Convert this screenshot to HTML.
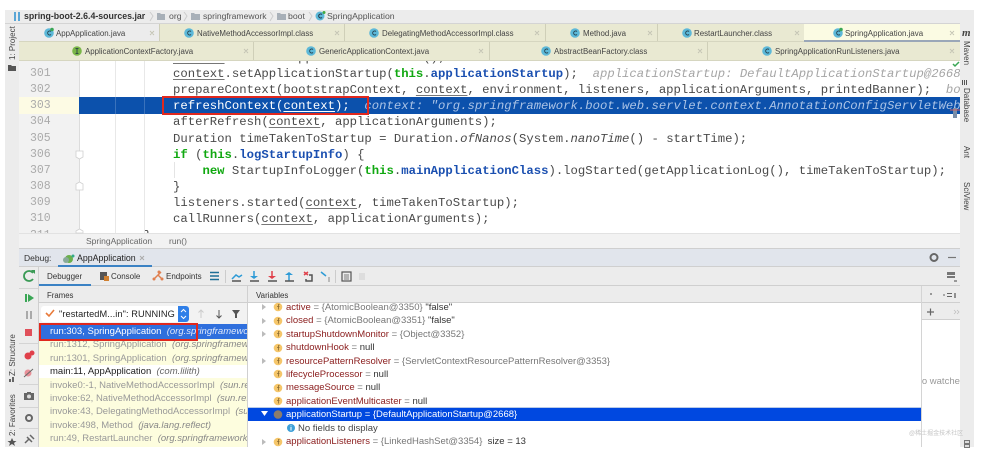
<!DOCTYPE html>
<html><head><meta charset="utf-8">
<style>
html,body{margin:0;padding:0;background:#fff;width:985px;height:455px;overflow:hidden}
#a{position:absolute;left:0;top:0;width:985px;height:455px;overflow:hidden;filter:blur(.3px);font-family:"Liberation Sans",sans-serif;font-size:9px;color:#333}
.r{position:absolute}
.t{position:absolute;white-space:nowrap;line-height:14px;height:14px}
.m{font-family:"Liberation Mono",monospace;font-size:12.28px;color:#4a4a4a;left:173px}
.n{font-family:"Liberation Mono",monospace;font-size:11.5px;color:#aaa;left:30px}
.m u{text-decoration-color:#777;text-underline-offset:2px}
.k{color:#10a810;font-weight:bold}
.f{color:#1a4fb0;font-weight:bold}
.h{color:#a5a5a5;font-style:italic}
.fr{color:#999;left:50px;font-size:9.5px}
.fr i{color:#888}
.v{left:286px;color:#777;font-size:9.5px}
.v b{font-weight:normal;color:#8c2020}
.v s{text-decoration:none;color:#333}
.tb{font-size:7.9px;color:#444}
.rot{position:absolute;white-space:nowrap;line-height:10px;font-size:8px;color:#444;transform-origin:0 0}
svg{position:absolute;left:0;top:0}
</style></head><body><div id="a">

<!-- chrome backgrounds -->
<div class="r" style="left:5px;top:10px;width:969px;height:437px;background:#ececec"></div>
<div class="r" style="left:5px;top:23px;width:955px;height:1px;background:#d4d4d4"></div>

<!-- tab rows -->
<div class="r" style="left:19px;top:24px;width:941px;height:18px;background:#e9e9d2"></div>
<div class="r" style="left:19px;top:24px;width:140px;height:17px;background:#ececec"></div>
<div class="r" style="left:804px;top:24px;width:156px;height:17px;background:#fbfbe3"></div>
<div class="r" style="left:804px;top:40px;width:156px;height:2px;background:#9aa7b8"></div>
<div class="r" style="left:19px;top:42px;width:941px;height:18px;background:#e9e9d2"></div>
<div class="r" style="left:19px;top:41px;width:785px;height:1px;background:#d6d6c0"></div>
<div class="r" style="left:19px;top:60px;width:941px;height:1px;background:#d6d6c0"></div>
<div class="r" style="left:159px;top:24px;width:1px;height:17px;background:#cfcfb8"></div>
<div class="r" style="left:344px;top:24px;width:1px;height:17px;background:#cfcfb8"></div>
<div class="r" style="left:545px;top:24px;width:1px;height:17px;background:#cfcfb8"></div>
<div class="r" style="left:657px;top:24px;width:1px;height:17px;background:#cfcfb8"></div>
<div class="r" style="left:253px;top:42px;width:1px;height:18px;background:#cfcfb8"></div>
<div class="r" style="left:489px;top:42px;width:1px;height:18px;background:#cfcfb8"></div>
<div class="r" style="left:707px;top:42px;width:1px;height:18px;background:#cfcfb8"></div>

<!-- editor -->
<div class="r" style="left:19px;top:61px;width:941px;height:173px;background:#fff"></div>
<div class="r" style="left:19px;top:61px;width:60px;height:173px;background:#f2f2f2"></div>
<div class="r" style="left:79px;top:61px;width:1px;height:173px;background:#dcdcdc"></div>
<div class="r" style="left:115px;top:61px;width:1px;height:173px;background:#e8e8e8"></div>
<div class="r" style="left:144px;top:61px;width:1px;height:173px;background:#e8e8e8"></div>
<div class="r" style="left:174px;top:162px;width:1px;height:16px;background:#e4e4e4"></div>
<div class="r" style="left:19px;top:97px;width:60px;height:17px;background:#fdfbe4"></div>
<div class="r" style="left:79px;top:97px;width:881px;height:17px;background:#0c51ac"></div>
<div class="r" style="left:115px;top:97px;width:1px;height:17px;background:#3a72bc"></div>
<div class="r" style="left:144px;top:97px;width:1px;height:17px;background:#3a72bc"></div>

<!-- code -->
<div class="r" style="left:0;top:61px;width:960px;height:172px;overflow:hidden">
<div class="t m" style="top:-10px"><u>context</u> = createApplicationContext();</div>
<div class="t m" style="top:6px"><u>context</u>.setApplicationStartup(<span class="k">this</span>.<span class="f">applicationStartup</span>);&nbsp;&nbsp;<span class="h">applicationStartup: DefaultApplicationStartup@2668</span></div>
<div class="t m" style="top:22px">prepareContext(bootstrapContext, <u>context</u>, environment, listeners, applicationArguments, printedBanner);&nbsp;&nbsp;<span class="h">bootstrapContext</span></div>
<div class="t m" style="top:38px;color:#fff">refreshContext(<u style="text-decoration-color:#fff">context</u>);&nbsp;&nbsp;<span style="font-style:italic;color:#aac3e6">context: "org.springframework.boot.web.servlet.context.AnnotationConfigServletWebServerApplicationContext</span></div>
<div class="t m" style="top:54px">afterRefresh(<u>context</u>, applicationArguments);</div>
<div class="t m" style="top:70.500px">Duration timeTakenToStartup = Duration.<i>ofNanos</i>(System.<i>nanoTime</i>() - startTime);</div>
<div class="t m" style="top:87px"><span class="k">if</span> (<span class="k">this</span>.<span class="f">logStartupInfo</span>) {</div>
<div class="t m" style="top:103px">&nbsp;&nbsp;&nbsp;&nbsp;<span class="k">new</span> StartupInfoLogger(<span class="k">this</span>.<span class="f">mainApplicationClass</span>).logStarted(getApplicationLog(), timeTakenToStartup);</div>
<div class="t m" style="top:119px">}</div>
<div class="t m" style="top:135px">listeners.started(<u>context</u>, timeTakenToStartup);</div>
<div class="t m" style="top:151px">callRunners(<u>context</u>, applicationArguments);</div>
<div class="t m" style="top:168px;left:144px">}</div>
<div class="t n" style="top:6px">301</div>
<div class="t n" style="top:22px">302</div>
<div class="t n" style="top:38px">303</div>
<div class="t n" style="top:54px">304</div>
<div class="t n" style="top:70.500px">305</div>
<div class="t n" style="top:87px">306</div>
<div class="t n" style="top:103px">307</div>
<div class="t n" style="top:119px">308</div>
<div class="t n" style="top:135px">309</div>
<div class="t n" style="top:151px">310</div>
<div class="t n" style="top:168px">311</div>
</div>

<!-- breadcrumb top -->
<div class="t" style="left:24px;top:9px;font-weight:bold;color:#333;font-size:8.8px">spring-boot-2.6.4-sources.jar</div>
<div class="t" style="left:169px;top:9px;color:#555;font-size:8.7px">org</div>
<div class="t" style="left:203px;top:9px;color:#555;font-size:8.6px">springframework</div>
<div class="t" style="left:288px;top:9px;color:#555;font-size:8.7px">boot</div>
<div class="t" style="left:327px;top:9px;color:#555;font-size:8.7px">SpringApplication</div>

<!-- tabs -->
<div class="t tb" style="left:56px;top:27px">AppApplication.java</div>
<div class="t tb" style="left:197px;top:27px">NativeMethodAccessorImpl.class</div>
<div class="t tb" style="left:382px;top:27px">DelegatingMethodAccessorImpl.class</div>
<div class="t tb" style="left:583px;top:27px">Method.java</div>
<div class="t tb" style="left:694px;top:27px">RestartLauncher.class</div>
<div class="t tb" style="left:845px;top:27px">SpringApplication.java</div>
<div class="t tb" style="left:85px;top:45px">ApplicationContextFactory.java</div>
<div class="t tb" style="left:319px;top:45px">GenericApplicationContext.java</div>
<div class="t tb" style="left:554px;top:45px">AbstractBeanFactory.class</div>
<div class="t tb" style="left:775px;top:45px">SpringApplicationRunListeners.java</div>

<!-- breadcrumb bottom -->
<div class="r" style="left:19px;top:233px;width:941px;height:15px;background:#f2f2f2;border-top:1px solid #e2e2e2;box-sizing:border-box"></div>
<div class="t" style="left:86px;top:234px;color:#666;font-size:8.5px">SpringApplication</div>
<div class="t" style="left:169px;top:234px;color:#666;font-size:8.5px">run()</div>

<!-- debug header -->
<div class="r" style="left:19px;top:248px;width:941px;height:19px;background:#e1e5ec;border-top:1px solid #cfcfcf;border-bottom:1px solid #cfcfcf;box-sizing:border-box"></div>
<div class="r" style="left:58px;top:265px;width:94px;height:2px;background:#3b82c4"></div>
<div class="t" style="left:24px;top:251px;font-size:8.5px;color:#333">Debug:</div>
<div class="t" style="left:77px;top:251px;font-size:8.8px;color:#222">AppApplication</div>

<!-- toolbar -->
<div class="r" style="left:19px;top:267px;width:19px;height:180px;background:#ececec"></div>
<div class="r" style="left:38px;top:267px;width:922px;height:19px;background:#ececec"></div>
<div class="r" style="left:38px;top:267px;width:1px;height:180px;background:#cfcfcf"></div>
<div class="r" style="left:39px;top:285px;width:921px;height:1px;background:#cfcfcf"></div>
<div class="r" style="left:39px;top:284px;width:52px;height:2px;background:#3b82c4"></div>
<div class="t" style="left:47px;top:270px;font-size:8px;color:#333">Debugger</div>
<div class="t" style="left:111px;top:270px;font-size:8px;color:#333">Console</div>
<div class="t" style="left:166px;top:270px;font-size:8px;color:#333">Endpoints</div>

<!-- panel headers -->
<div class="r" style="left:39px;top:286px;width:921px;height:17px;background:#ececec;border-bottom:1px solid #cfcfcf;box-sizing:border-box"></div>
<div class="t" style="left:47px;top:289px;font-size:7.8px;color:#333">Frames</div>
<div class="t" style="left:256px;top:289px;font-size:7.9px;color:#333">Variables</div>
<div class="r" style="left:247px;top:286px;width:1px;height:161px;background:#d0d0d0"></div>

<!-- frames -->
<div class="r" style="left:39px;top:303px;width:208px;height:21px;background:#f2f2f2"></div>
<div class="r" style="left:41px;top:306px;width:148px;height:16px;background:#fff;border-radius:3px"></div>
<div class="r" style="left:178px;top:306px;width:11px;height:16px;background:#2f7fe8;border-radius:0 3px 3px 0"></div>
<div class="t" style="left:59px;top:307px;font-size:9.2px;color:#222;letter-spacing:.1px">"restartedM...in": RUNNING</div>

<div class="r" style="left:39px;top:324px;width:208px;height:123px;background:#fdfdde"></div>
<div class="r" style="left:39px;top:324px;width:208px;height:15px;background:#2f6fdd"></div>
<div class="r" style="left:39px;top:365px;width:208px;height:13px;background:#fff"></div>
<div class="r" style="left:39px;top:324px;width:208px;height:123px;overflow:hidden">
<div class="t fr" style="left:11px;top:1px;color:#fff">run:303, SpringApplication&nbsp; <i style="color:#dfe8fa">(org.springframework.boot)</i></div>
<div class="t fr" style="left:11px;top:14px">run:1312, SpringApplication&nbsp; <i>(org.springframework.boot)</i></div>
<div class="t fr" style="left:11px;top:28px">run:1301, SpringApplication&nbsp; <i>(org.springframework.boot)</i></div>
<div class="t fr" style="left:11px;top:41px;color:#222">main:11, AppApplication&nbsp; <i style="color:#666">(com.lilith)</i></div>
<div class="t fr" style="left:11px;top:55px">invoke0:-1, NativeMethodAccessorImpl&nbsp; <i>(sun.reflect)</i></div>
<div class="t fr" style="left:11px;top:68px">invoke:62, NativeMethodAccessorImpl&nbsp; <i>(sun.reflect)</i></div>
<div class="t fr" style="left:11px;top:81px">invoke:43, DelegatingMethodAccessorImpl&nbsp; <i>(sun.reflect)</i></div>
<div class="t fr" style="left:11px;top:95px">invoke:498, Method&nbsp; <i>(java.lang.reflect)</i></div>
<div class="t fr" style="left:11px;top:108px">run:49, RestartLauncher&nbsp; <i>(org.springframework.boot.devtools)</i></div>
</div>

<!-- variables -->
<div class="r" style="left:248px;top:303px;width:673px;height:144px;background:#fff"></div>
<div class="r" style="left:248px;top:407px;width:673px;height:1px;background:#b9cbe8"></div>
<div class="r" style="left:248px;top:408px;width:673px;height:13px;background:#0048e0"></div>
<div class="t v" style="top:301px"><b>active</b> = {AtomicBoolean@3350} <s>"false"</s></div>
<div class="t v" style="top:314px"><b>closed</b> = {AtomicBoolean@3351} <s>"false"</s></div>
<div class="t v" style="top:328px"><b>startupShutdownMonitor</b> = {Object@3352}</div>
<div class="t v" style="top:341px"><b>shutdownHook</b> = <s>null</s></div>
<div class="t v" style="top:355px"><b>resourcePatternResolver</b> = {ServletContextResourcePatternResolver@3353}</div>
<div class="t v" style="top:368px"><b>lifecycleProcessor</b> = <s>null</s></div>
<div class="t v" style="top:381px"><b>messageSource</b> = <s>null</s></div>
<div class="t v" style="top:395px"><b>applicationEventMulticaster</b> = <s>null</s></div>
<div class="t v" style="top:408px;color:#fff">applicationStartup = {DefaultApplicationStartup@2668}</div>
<div class="t v" style="top:422px;left:298px;color:#444">No fields to display</div>
<div class="t v" style="top:435px"><b>applicationListeners</b> = {LinkedHashSet@3354} &nbsp;<s>size = 13</s></div>

<!-- watches -->
<div class="r" style="left:921px;top:286px;width:1px;height:161px;background:#d4d4d4"></div>
<div class="r" style="left:922px;top:303px;width:38px;height:17px;background:#ececec;border-bottom:1px solid #cfcfcf;box-sizing:border-box"></div>
<div class="r" style="left:922px;top:320px;width:38px;height:127px;background:#fff;overflow:hidden">
<div class="t" style="left:-7px;top:55px;color:#999;font-size:9.5px">No watches</div>
</div>

<!-- side tool text -->
<div class="rot" style="left:8px;top:60px;transform:rotate(-90deg)">1: Project</div>
<div class="rot" style="left:8px;top:376px;transform:rotate(-90deg)">Z: Structure</div>
<div class="rot" style="left:8px;top:436px;transform:rotate(-90deg)">2: Favorites</div>
<div class="rot" style="left:971px;top:41px;transform:rotate(90deg)">Maven</div>
<div class="rot" style="left:971px;top:88px;transform:rotate(90deg)">Database</div>
<div class="rot" style="left:971px;top:146px;transform:rotate(90deg)">Ant</div>
<div class="rot" style="left:971px;top:182px;transform:rotate(90deg)">SciView</div>
<div class="t" style="left:962px;top:27px;font:italic bold 11px 'Liberation Serif',serif;color:#444">m</div>

<svg width="985" height="455" viewBox="0 0 985 455">
<!-- top breadcrumb icons -->
<rect x="14" y="12" width="2" height="9" fill="#5aa6d6"/><rect x="18" y="12" width="2" height="9" fill="#5aa6d6"/>
<path d="M157 20h8v-6h-4l-1-1h-3z" fill="#a8b0b8"/><path d="M191 20h9v-6h-5l-1-1h-3z" fill="#a8b0b8"/><path d="M277 20h9v-6h-5l-1-1h-3z" fill="#a8b0b8"/>
<path d="M150 12l3 4-3 5M184 12l3 4-3 5M270 12l3 4-3 5M309 12l3 4-3 5" fill="none" stroke="#ccc"/>
<circle cx="320" cy="16" r="4.500" fill="#5cb8d8"/><path d="M322 14.500a2 2 0 1 0 0 3" fill="none" stroke="#234"/><circle cx="324" cy="12.500" r="1.500" fill="#4a4"/>
<!-- tab icons -->
<g fill="#5cb8d8">
<circle cx="49" cy="33" r="4.800"/><circle cx="189" cy="33" r="4.800"/><circle cx="374" cy="33" r="4.800"/><circle cx="575" cy="33" r="4.800"/><circle cx="687" cy="33" r="4.800"/><circle cx="838" cy="33" r="4.800"/>
<circle cx="311" cy="51" r="4.800"/><circle cx="546" cy="51" r="4.800"/><circle cx="767" cy="51" r="4.800"/>
</g>
<circle cx="77" cy="51" r="4.800" fill="#7ab648"/>
<path d="M75.500 48.500h3M77 48.500v5M75.500 53.500h3" stroke="#234" fill="none" stroke-width=".8"/>
<g fill="none" stroke="#24404c" stroke-width=".9">
<path d="M191 31.500a2 2 0 1 0 0 3M376 31.500a2 2 0 1 0 0 3M577 31.500a2 2 0 1 0 0 3M689 31.500a2 2 0 1 0 0 3M840 31.500a2 2 0 1 0 0 3M51 31.500a2 2 0 1 0 0 3M313 49.500a2 2 0 1 0 0 3M548 49.500a2 2 0 1 0 0 3M769 49.500a2 2 0 1 0 0 3"/>
</g>
<circle cx="52" cy="29.500" r="1.800" fill="#3aa655"/><circle cx="841" cy="29.500" r="1.800" fill="#3aa655"/>
<!-- tab close -->
<g stroke="#c4c4b4" stroke-width=".9" fill="none">
<path d="M150 31l4 4m0-4l-4 4M335 31l4 4m0-4l-4 4M535 31l4 4m0-4l-4 4M648 31l4 4m0-4l-4 4M795 31l4 4m0-4l-4 4M950 31l4 4m0-4l-4 4"/>
<path d="M244 49l4 4m0-4l-4 4M479 49l4 4m0-4l-4 4M698 49l4 4m0-4l-4 4M950 49l4 4m0-4l-4 4"/>
</g>
<!-- folder project -->
<path d="M8 71h8v-5h-4l-1-1h-3z" fill="#555"/>
<!-- check in editor -->
<path d="M953 64l2 2 4-4" fill="none" stroke="#3aa655" stroke-width="1.500"/>
<!-- fold markers -->
<g fill="#fff" stroke="#d0d0d0" stroke-width=".8">
<path d="M76 151h7v6l-3.500 2-3.500-2z"/><path d="M76 190h7v-6l-3.500-2-3.500 2z"/><path d="M76 233v-2l3.500-2 3.500 2v2z"/>
</g>
<!-- right strip misc -->
<rect x="962" y="80" width="1" height="5" fill="#555"/><rect x="964" y="80" width="1" height="5" fill="#555"/><rect x="966" y="80" width="1" height="5" fill="#555"/>
<rect x="964" y="440" width="6" height="8" fill="#777"/><rect x="965" y="441" width="4" height="2" fill="#ddd"/><rect x="965" y="445" width="4" height="2" fill="#ddd"/>
<path d="M955 108v10" stroke="#7a8ea8" stroke-width="4"/>
<path d="M950 110h10" stroke="#d06060" stroke-width="1"/>
<!-- debug header icons -->
<circle cx="69" cy="259" r="4" fill="#6ab04c"/><circle cx="73" cy="256" r="1.500" fill="#3a8"/><circle cx="66" cy="260" r="3" fill="#8a9"/>
<path d="M140 256l4 4m0-4l-4 4" stroke="#aaa" fill="none"/>
<!-- gear + minus -->
<circle cx="934" cy="257.500" r="3.500" fill="none" stroke="#666" stroke-width="2"/>
<path d="M948 257.500h8" stroke="#777" stroke-width="1.200"/>
<rect x="947" y="272" width="8" height="6" fill="#777"/><path d="M947 275.500h8" stroke="#eee"/><path d="M954 281h3" stroke="#444"/>
<!-- watches icons -->
<path d="M931 293v2" stroke="#444"/><path d="M943 295h2M947 293.500h5M947 296.500h5" stroke="#666"/><path d="M955 293v5" stroke="#333"/>
<path d="M927 312h7M930.500 308.500v7" stroke="#666" stroke-width="1.200"/>
<path d="M954 310l2 2-2 2M957 310l2 2-2 2" stroke="#bbb" fill="none" stroke-width=".7"/>
<!-- debugger tab icons -->
<rect x="100" y="272" width="7" height="8" fill="#555"/><path d="M104 276h5v5h-5z" fill="#d08030"/>
<path d="M154 279l4-4 4 4M158 275l3-3" fill="none" stroke="#e08050" stroke-width="1.500"/><circle cx="154" cy="279" r="1.500" fill="#e08050"/><circle cx="162" cy="279" r="1.500" fill="#e08050"/><circle cx="159" cy="272" r="1.500" fill="#e08050"/>
<path d="M210 272.500h9M210 276h9M210 279.500h9" stroke="#1d6f96" stroke-width="1.400"/>
<rect x="225" y="270" width="1" height="13" fill="#ccc"/><rect x="335" y="270" width="1" height="13" fill="#ccc"/>
<!-- step icons -->
<g fill="none" stroke-width="1.500">
<path d="M232 279l4-4 3 2 3-2" stroke="#2e9bd6"/><path d="M232 281h9" stroke="#555"/>
<path d="M254 271v5" stroke="#2e9bd6"/><path d="M250 276h8l-4 3z" fill="#2e9bd6" stroke="none"/><path d="M250 281h9" stroke="#555"/>
<path d="M272 271v5" stroke="#e0404a"/><path d="M268 276h8l-4 3z" fill="#e0404a" stroke="none"/><path d="M268 281h9" stroke="#555"/>
<path d="M289 281v-6" stroke="#2e9bd6"/><path d="M285 275h8l-4-3z" fill="#2e9bd6" stroke="none"/><path d="M285 281h9" stroke="#555"/>
<path d="M304 272l4 3m0-3l-4 3" stroke="#e0404a"/><path d="M309 275h3v6h-6v-2" stroke="#555"/>
<path d="M321 272l5 4" stroke="#2e9bd6"/><path d="M329 277v5" stroke="#888" stroke-width="1"/>
</g>
<rect x="342" y="272" width="9" height="9" fill="none" stroke="#555" stroke-width="1.200"/><path d="M344 275h5M344 277h5M344 279h5" stroke="#555" stroke-width=".8"/>
<rect x="359" y="273" width="6" height="7" fill="#ddd"/>
<!-- left toolbar icons -->
<path d="M33 273a5 5 0 1 0 0 6" fill="none" stroke="#3a9a55" stroke-width="1.800"/><path d="M31 270h4v4z" fill="#3a9a55"/>
<rect x="25" y="294" width="2" height="8" fill="#3aa655"/><path d="M28 294l6 4-6 4z" fill="#3aa655"/>
<rect x="26" y="311" width="2" height="8" fill="#aaa"/><rect x="30" y="311" width="2" height="8" fill="#aaa"/>
<rect x="25" y="329" width="7" height="7" fill="#e0505a"/>
<circle cx="28" cy="356" r="3.500" fill="#e0404a"/><circle cx="32" cy="353" r="2.500" fill="#e0404a"/>
<circle cx="28" cy="373" r="3.500" fill="#e89098"/><path d="M24 377l9-8" stroke="#666"/>
<rect x="24" y="393" width="10" height="7" fill="#666"/><rect x="27" y="392" width="4" height="2" fill="#666"/><circle cx="29" cy="396.500" r="2" fill="#ddd"/>
<circle cx="29" cy="418" r="3" fill="none" stroke="#666" stroke-width="2"/>
<path d="M25 443l4-4m-2-2l5 5m-2-7l4 4" stroke="#666" stroke-width="1.500" fill="none"/>
<g fill="#d4d4d4"><rect x="19" y="288" width="19" height="1"/><rect x="19" y="343" width="19" height="1"/><rect x="19" y="384" width="19" height="1"/><rect x="19" y="428" width="19" height="1"/><rect x="19" y="407" width="19" height="1"/></g>
<!-- side -->
<rect x="9" y="379" width="2" height="3" fill="#666"/><rect x="12" y="377" width="2" height="5" fill="#666"/>
<path d="M12 438l1.500 3h3l-2.500 2 1 3-3-2-3 2 1-3-2.500-2h3z" fill="#555"/>
<!-- combo -->
<path d="M46 313l3 3 5-6" fill="none" stroke="#e87a3a" stroke-width="1.600"/>
<path d="M181 312l2.500-2.500 2.500 2.500M181 316l2.500 2.500 2.500-2.500" fill="none" stroke="#fff"/>
<path d="M201 318v-8m-2.500 2.500l2.500-2.500 2.500 2.500" fill="none" stroke="#ccc"/>
<path d="M219 310v8m-2.500-2.500l2.500 2.500 2.500-2.500" fill="none" stroke="#555"/>
<path d="M232 310h8l-3 4v4h-2v-4z" fill="#555"/>
<!-- var icons -->
<g fill="#bbb">
<path d="M262 304l4 3-4 3z"/><path d="M262 318l4 3-4 3z"/><path d="M262 331l4 3-4 3z"/><path d="M262 358l4 3-4 3z"/><path d="M262 439l4 3-4 3z"/>
</g>
<path d="M261 411h7l-3.500 5z" fill="#fff"/>
<g fill="#f5c66a">
<circle cx="278" cy="307" r="4.300"/><circle cx="278" cy="321" r="4.300"/><circle cx="278" cy="334" r="4.300"/><circle cx="278" cy="348" r="4.300"/><circle cx="278" cy="361" r="4.300"/><circle cx="278" cy="374" r="4.300"/><circle cx="278" cy="388" r="4.300"/><circle cx="278" cy="401" r="4.300"/><circle cx="278" cy="442" r="4.300"/>
</g>
<circle cx="278" cy="414.500" r="4.300" fill="#8c7c6c"/>
<g fill="none" stroke="#8a6a30" stroke-width=".8">
<path d="M279.500 304.500h-1v5M277 306.500h2.500M279.500 318.500h-1v5M277 320.500h2.500M279.500 331.500h-1v5M277 333.500h2.500M279.500 345.500h-1v5M277 347.500h2.500M279.500 358.500h-1v5M277 360.500h2.500M279.500 371.500h-1v5M277 373.500h2.500M279.500 385.500h-1v5M277 387.500h2.500M279.500 398.500h-1v5M277 400.500h2.500M279.500 439.500h-1v5M277 441.500h2.500"/>
</g>
<circle cx="291" cy="428" r="4" fill="#3da0d8"/><path d="M291 427v3.500M291 425.500v.8" stroke="#fff"/>
<!-- red boxes -->
<rect x="163" y="97" width="205" height="17" fill="none" stroke="#e0281e" stroke-width="2"/>
<rect x="40" y="324" width="157" height="16" fill="none" stroke="#e0281e" stroke-width="2"/>
</svg>
<div class="t" style="left:909px;top:427px;font-size:6px;color:#c4c4c4;font-family:'Liberation Sans','Noto Sans CJK SC',sans-serif">@稀土掘金技术社区</div>
</div></body></html>
